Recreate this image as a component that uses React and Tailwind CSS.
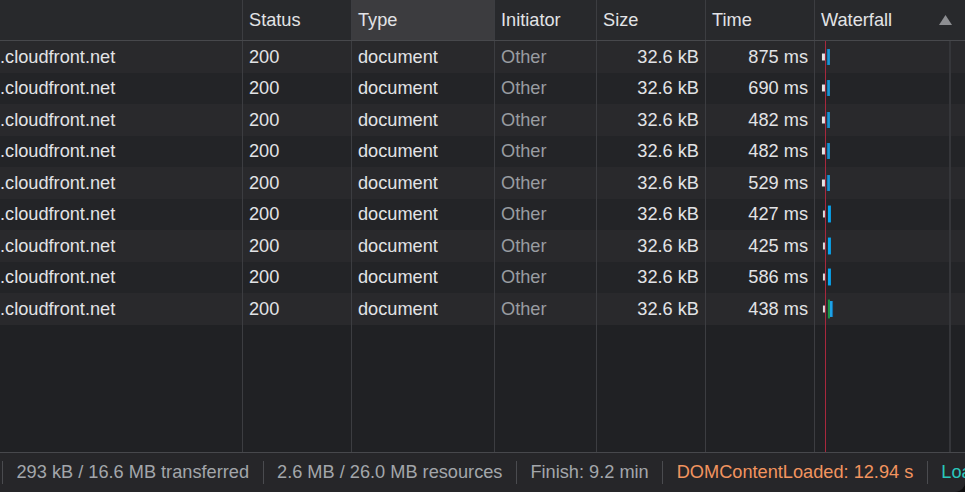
const GRID = 'grid grid-cols-[242px_109px_143px_102px_109px_109px_151px]';

const rows = [
  { time: '875 ms', bars: 'a' },
  { time: '690 ms', bars: 'a' },
  { time: '482 ms', bars: 'a' },
  { time: '482 ms', bars: 'a' },
  { time: '529 ms', bars: 'a' },
  { time: '427 ms', bars: 'b' },
  { time: '425 ms', bars: 'b' },
  { time: '586 ms', bars: 'b' },
  { time: '438 ms', bars: 'c' },
];

function Bars({ kind }) {
  // little waterfall marks, x measured from the column's left border
  return (
    <svg width="151" height="32" viewBox="0 0 151 32" className="block">
      {kind === 'a' && (
        <>
          <rect x="7" y="12.5" width="3" height="7" fill="#e4e4e6" />
          <rect x="12" y="8" width="3" height="16" fill="#1b95d6" />
          <rect x="12" y="8" width="0.8" height="16" fill="#1672a8" />
        </>
      )}
      {kind === 'b' && (
        <>
          <rect x="8" y="12.5" width="2" height="7" fill="#dcdcde" />
          <rect x="13" y="7.5" width="3" height="17" fill="#08a6f2" />
        </>
      )}
      {kind === 'c' && (
        <>
          <rect x="8" y="12.5" width="2" height="7" fill="#dcdcde" />
          <rect x="13" y="6.5" width="2" height="19" fill="#1a9a46" />
          <rect x="15" y="8" width="3" height="16" fill="#1ea2e6" />
          <rect x="17.4" y="8" width="0.8" height="16" fill="#14639a" />
        </>
      )}
    </svg>
  );
}

function Row({ row, odd }) {
  const bg = odd ? 'bg-[#29292c]' : 'bg-[#232427]';
  return (
    <div className={`${GRID} h-[31.5px] ${bg} text-[#e2e3e6]`}>
      <div className="flex items-center overflow-hidden whitespace-nowrap">.cloudfront.net</div>
      <div className="flex items-center border-l border-[#3c3d41] pl-[6px]">200</div>
      <div className="flex items-center border-l border-[#3c3d41] pl-[6px]">document</div>
      <div className="flex items-center border-l border-[#3c3d41] pl-[6px] text-[#999ca1]">Other</div>
      <div className="flex items-center justify-end border-l border-[#3c3d41] pr-[6px]">32.6 kB</div>
      <div className="flex items-center justify-end border-l border-[#3c3d41] pr-[6px]">{row.time}</div>
      <div className="flex items-center border-l border-[#3c3d41] overflow-hidden">
        <Bars kind={row.bars} />
      </div>
    </div>
  );
}

export default function App() {
  return (
    <div className="w-[965px] h-[492px] bg-[#0e0e0f]">
      <div className="flex h-full flex-col overflow-hidden rounded-br-[10px] bg-[#202124] font-['Liberation_Sans',Arial,sans-serif] text-[18.2px] leading-none">
        {/* header */}
        <div className={`${GRID} h-[41px] shrink-0 border-b border-[#47484c] bg-[#28292c] text-[#e2e3e6]`}>
          <div />
          <div className="flex items-center border-l border-[#3c3d41] pl-[6px]">Status</div>
          <div className="flex items-center border-l border-[#3c3d41] bg-[#3c3c3f] pl-[6px]">Type</div>
          <div className="flex items-center border-l border-[#3c3d41] pl-[6px]">Initiator</div>
          <div className="flex items-center border-l border-[#3c3d41] pl-[6px]">Size</div>
          <div className="flex items-center border-l border-[#3c3d41] pl-[6px]">Time</div>
          <div className="flex items-center justify-between border-l border-[#3c3d41] pl-[6px] pr-[13px]">
            <span>Waterfall</span>
            <svg width="13" height="10" viewBox="0 0 13 10">
              <path d="M6.5 0 L13 10 L0 10 Z" fill="#8d8e92" />
            </svg>
          </div>
        </div>

        {/* rows */}
        <div className="relative flex flex-1 flex-col">
          {rows.map((row, i) => (
            <Row key={i} row={row} odd={i % 2 === 0} />
          ))}
          <div className={`${GRID} flex-1`}>
            <div />
            <div className="border-l border-[#3c3d41]" />
            <div className="border-l border-[#3c3d41]" />
            <div className="border-l border-[#3c3d41]" />
            <div className="border-l border-[#3c3d41]" />
            <div className="border-l border-[#3c3d41]" />
            <div className="border-l border-[#3c3d41]" />
          </div>
          <div className="absolute top-0 bottom-0 left-[949px] w-[2px] bg-[#35363a]" />
          <div className="absolute top-0 bottom-0 left-[825px] w-px bg-[#a8283d]" />
        </div>

        {/* footer */}
        <div className="flex h-[40px] shrink-0 items-center overflow-hidden whitespace-nowrap border-t border-[#47484c] bg-[#262629] pl-[2px] text-[#a3a6ab]">
          <div className="flex h-[23px] items-center border-l border-[#4a4b4f] px-[13.5px]">293 kB / 16.6 MB transferred</div>
          <div className="flex h-[23px] items-center border-l border-[#4a4b4f] px-[13.5px]">2.6 MB / 26.0 MB resources</div>
          <div className="flex h-[23px] items-center border-l border-[#4a4b4f] px-[13.5px]">Finish: 9.2 min</div>
          <div className="flex h-[23px] items-center border-l border-[#4a4b4f] px-[13.5px] text-[#f2945f]">DOMContentLoaded: 12.94 s</div>
          <div className="flex h-[23px] items-center border-l border-[#4a4b4f] px-[13.5px] text-[#2ac6bb]">Load: 13.02 s</div>
        </div>
      </div>
    </div>
  );
}
